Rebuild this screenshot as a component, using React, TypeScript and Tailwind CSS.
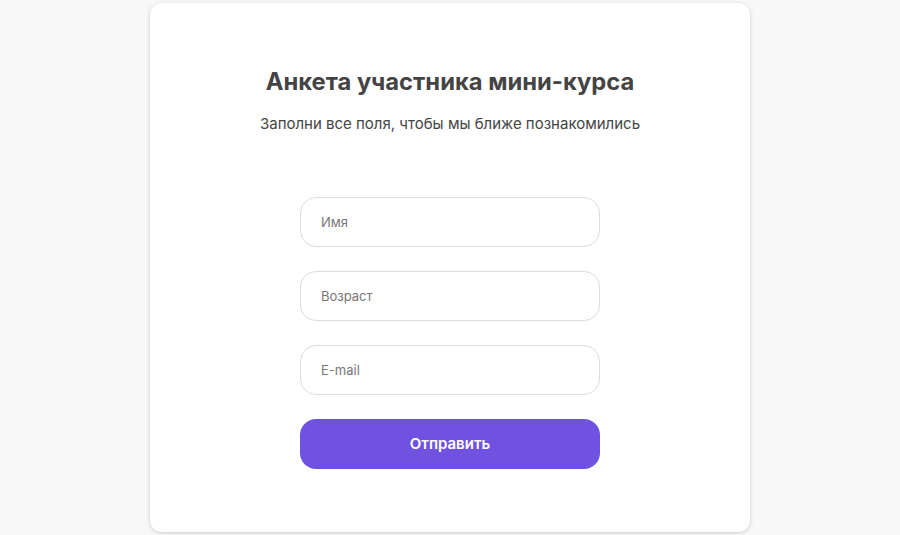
export default function App() {
  const fields = ['Имя', 'Возраст', 'E-mail'];

  return (
    <div
      className="flex min-h-screen items-center justify-center bg-[#f8f8f8]"
      style={{ fontFamily: 'Inter, "Noto Sans", sans-serif' }}
    >
      <div className="flex h-[529px] w-[600px] flex-col items-center rounded-xl bg-white pt-16 shadow-[0_1px_4px_rgba(0,0,0,0.18)]">
        <h1 className="text-[23.75px] font-bold leading-[29px] text-[#444]">Анкета участника мини-курса</h1>
        <p className="mt-4 text-[15px] leading-6 text-[#444]">Заполни все поля, чтобы мы ближе познакомились</p>

        <form className="mt-[61px] flex w-[300px] flex-col gap-6" onSubmit={(e) => e.preventDefault()}>
          {fields.map((f) => (
            <input
              key={f}
              placeholder={f}
              className="h-[50px] w-full rounded-2xl border border-[#ddd] bg-white px-5 text-[13px] text-[#333] placeholder:text-[#777] focus:outline-none"
            />
          ))}
          <button
            type="submit"
            className="h-[50px] w-full rounded-2xl bg-[#6f52e0] text-[15px] font-semibold text-white"
          >
            Отправить
          </button>
        </form>
      </div>
    </div>
  );
}
